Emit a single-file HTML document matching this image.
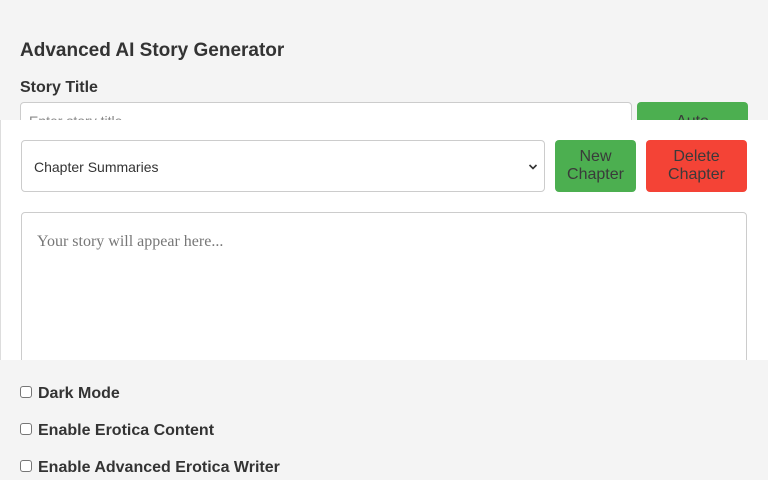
<!DOCTYPE html>
<html><head><style>
body{margin:0;width:768px;height:480px;background:#f4f4f4;font-family:"Liberation Sans",sans-serif;color:#333;position:relative;overflow:hidden}
.abs{position:absolute}
h1{position:absolute;left:20px;top:40px;margin:0;font-size:19px;font-weight:bold;color:#333}
.lbl{font-size:16px;font-weight:bold}
.inp{background:#fff;border:1px solid #ccc;border-radius:4px;box-sizing:border-box}
.btn{color:#3a3a3a;font-size:16px;text-align:center;border-radius:4px;line-height:18px}
.cb{width:12px;height:12px;border:1px solid #767676;border-radius:3px;background:#fff;box-sizing:border-box}
</style></head><body>
<h1>Advanced AI Story Generator</h1>
<div class="abs lbl" style="left:20px;top:79px">Story Title</div>
<div class="abs inp" style="left:20px;top:102px;width:612px;height:40px;padding:10px 8px;font-size:14px;color:#888">Enter story title</div>
<div class="abs btn" style="left:637px;top:102px;width:111px;height:40px;background:#4caf50;padding-top:11px;box-sizing:border-box">Auto</div>
<div class="abs" style="left:0;top:120px;width:768px;height:240px;background:#fff;border-left:1px solid #ddd;box-sizing:border-box"></div>
<div class="abs inp" style="left:21px;top:140px;width:524px;height:52px;font-size:14px;padding:18px 12px"><span>Chapter Summaries</span>
<svg style="position:absolute;right:6px;top:22px" width="10" height="8" viewBox="0 0 10 8"><path d="M1.5 2 L5 5.5 L8.5 2" stroke="#333" stroke-width="1.6" fill="none"/></svg></div>
<div class="abs btn" style="left:555px;top:140px;width:81px;height:52px;background:#4caf50;padding-top:8px;box-sizing:border-box">New<br>Chapter</div>
<div class="abs btn" style="left:646px;top:140px;width:101px;height:52px;background:#f44336;padding-top:8px;box-sizing:border-box">Delete<br>Chapter</div>
<div class="abs inp" style="left:21px;top:212px;width:726px;height:160px;padding:20px 15px;font-family:'Liberation Serif',serif;font-size:16px;color:#777">Your story will appear here...</div>
<div class="abs" style="left:0;top:360px;width:768px;height:120px;background:#f4f4f4"></div>
<div class="abs cb" style="left:20px;top:386px"></div><div class="abs lbl" style="left:38px;top:385px">Dark Mode</div>
<div class="abs cb" style="left:20px;top:423px"></div><div class="abs lbl" style="left:38px;top:422px">Enable Erotica Content</div>
<div class="abs cb" style="left:20px;top:460px"></div><div class="abs lbl" style="left:38px;top:459px">Enable Advanced Erotica Writer</div>
</body></html>
